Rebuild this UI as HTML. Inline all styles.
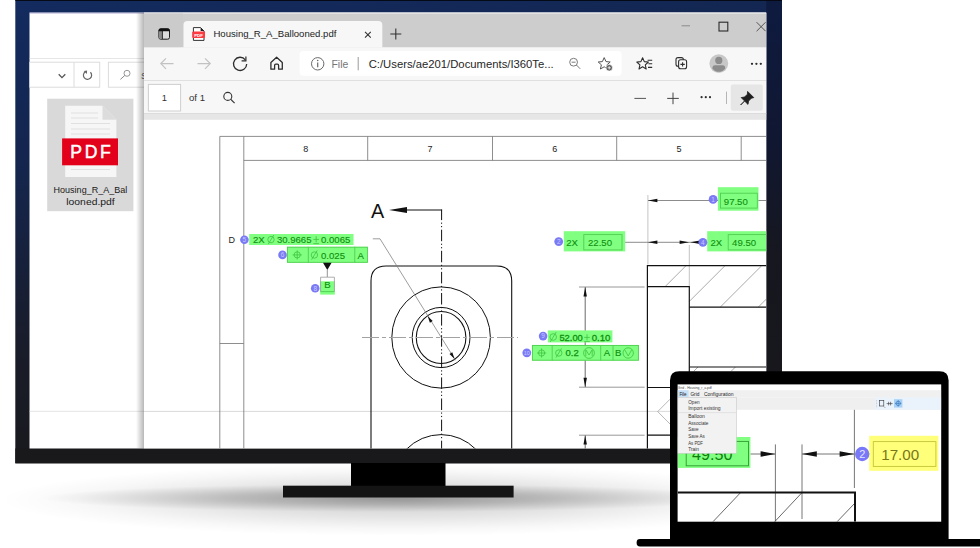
<!DOCTYPE html>
<html lang="en">
<head>
<meta charset="utf-8">
<title>Housing_R_A_Ballooned.pdf</title>
<style>
html,body{margin:0;padding:0;background:#fff;}
body{width:980px;height:548px;overflow:hidden;font-family:"Liberation Sans",sans-serif;}
svg{display:block;}
text{font-family:"Liberation Sans",sans-serif;}
</style>
</head>
<body>
<svg width="980" height="548" viewBox="0 0 980 548">
<defs>
  <linearGradient id="bezel" x1="0" y1="0" x2="0.25" y2="1">
    <stop offset="0" stop-color="#132b5f"/>
    <stop offset="0.35" stop-color="#14254d"/>
    <stop offset="0.7" stop-color="#191c2a"/>
    <stop offset="1" stop-color="#19191b"/>
  </linearGradient>
  <linearGradient id="bezelR" x1="0" y1="0" x2="0" y2="1">
    <stop offset="0" stop-color="#0e1b40"/>
    <stop offset="0.3" stop-color="#101731"/>
    <stop offset="0.55" stop-color="#16171f"/>
    <stop offset="1" stop-color="#18181a"/>
  </linearGradient>
  <linearGradient id="winshadow" x1="0" y1="0" x2="1" y2="0">
    <stop offset="0" stop-color="#000" stop-opacity="0"/>
    <stop offset="1" stop-color="#000" stop-opacity="0.28"/>
  </linearGradient>
  <radialGradient id="shA">
    <stop offset="0" stop-color="#000" stop-opacity="0.2"/>
    <stop offset="0.45" stop-color="#000" stop-opacity="0.11"/>
    <stop offset="0.8" stop-color="#000" stop-opacity="0.03"/>
    <stop offset="1" stop-color="#000" stop-opacity="0"/>
  </radialGradient>
  <radialGradient id="shB">
    <stop offset="0" stop-color="#000" stop-opacity="0.27"/>
    <stop offset="0.45" stop-color="#000" stop-opacity="0.17"/>
    <stop offset="0.8" stop-color="#000" stop-opacity="0.06"/>
    <stop offset="1" stop-color="#000" stop-opacity="0"/>
  </radialGradient>
  <filter id="blur12" x="-20%" y="-100%" width="140%" height="300%"><feGaussianBlur stdDeviation="12"/></filter>
  <filter id="blur8" x="-20%" y="-100%" width="140%" height="300%"><feGaussianBlur stdDeviation="7"/></filter>
  <clipPath id="screen"><rect x="29.5" y="12.5" width="736.7" height="436"/></clipPath>
  <clipPath id="lapscreen"><rect x="677.6" y="384.4" width="263.6" height="137.3"/></clipPath>
</defs>

<!-- background -->
<rect width="980" height="548" fill="#ffffff"/>

<!-- ground shadows -->
<g id="shadows">
  <ellipse cx="400" cy="500" rx="400" ry="36" fill="url(#shA)"/>
  <ellipse cx="390" cy="498" rx="350" ry="14" fill="url(#shB)"/>
</g>

<!-- monitor -->
<g id="monitor">
  <rect x="15.3" y="0" width="766.7" height="463.3" fill="url(#bezel)"/>
  <rect x="766.2" y="0" width="15.8" height="463.3" fill="url(#bezelR)"/>
  <rect x="15.3" y="0" width="766.7" height="0.9" fill="#05070f"/>
  <rect x="15.3" y="448.5" width="766.7" height="14.8" fill="#19191b"/>
  <rect x="29.5" y="12.5" width="736.7" height="436" fill="#ffffff"/>
  <!-- stand -->
  <rect x="351" y="463" width="94.5" height="23" fill="#000000"/>
  <rect x="283" y="485.7" width="230.6" height="11.8" fill="#141414"/>
</g>

<g id="screen-content" clip-path="url(#screen)">
  <!-- file explorer -->
  <g id="explorer">
    <rect x="29.5" y="12.5" width="120" height="1" fill="#7c6fb5" opacity="0.6"/>
    <rect x="29.5" y="58" width="115" height="1" fill="#e6e6e6"/>
    <rect x="22" y="62.2" width="77.7" height="25" fill="#fff" stroke="#dcdcdc" stroke-width="1"/>
    <line x1="74" y1="62.2" x2="74" y2="87.2" stroke="#dcdcdc"/>
    <rect x="108.4" y="62.2" width="50" height="25" fill="#fff" stroke="#dcdcdc" stroke-width="1"/>
    <path d="M58.7 74.3 L62 77.6 L65.3 74.3" fill="none" stroke="#555" stroke-width="1.3"/>
    <path d="M85.4 71.7 A4.1 4.1 0 1 0 90.4 72.3" fill="none" stroke="#666" stroke-width="1.2"/>
    <path d="M83.7 70.9 L87.1 70.6 L86.9 74 Z" fill="#666"/>
    <circle cx="127" cy="73.3" r="3" fill="none" stroke="#8a8a8a" stroke-width="0.9"/>
    <line x1="124.8" y1="75.4" x2="120.4" y2="79.4" stroke="#8a8a8a" stroke-width="1"/>
    <text x="141" y="78.6" font-size="9.4" fill="#666">S</text>
    <!-- selected file -->
    <rect x="47.2" y="98.7" width="86.2" height="112.5" fill="#d9d9d9"/>
    <path d="M65.2 105.8 H102.5 L116.4 119.8 V177 H65.2 Z" fill="#f6f6f6"/>
    <path d="M102.5 105.8 L116.4 119.8 H102.5 Z" fill="#dcdcdc"/>
    <g stroke="#dedede" stroke-width="0.9">
      <line x1="71" y1="113" x2="98" y2="113"/><line x1="71" y1="118" x2="98" y2="118"/>
      <line x1="71" y1="123.5" x2="110" y2="123.5"/><line x1="71" y1="129" x2="110" y2="129"/><line x1="71" y1="134" x2="110" y2="134"/>
      <line x1="71" y1="169.5" x2="110" y2="169.5"/>
    </g>
    <rect x="62.1" y="138.4" width="55.9" height="26.9" fill="#e2001a"/>
    <text x="70.2" y="157.5" font-size="17.6" fill="#ffffff" stroke="#ffffff" stroke-width="0.5" textLength="40.6" lengthAdjust="spacing">PDF</text>
    <text x="53.6" y="193" font-size="9.8" fill="#1a1a1a" textLength="73.6" lengthAdjust="spacingAndGlyphs">Housing_R_A_Bal</text>
    <text x="66.3" y="205.2" font-size="9.8" fill="#1a1a1a" textLength="48.4" lengthAdjust="spacingAndGlyphs">looned.pdf</text>
    <rect x="29.5" y="410.8" width="115" height="1" fill="#e4e4e4"/>
  </g>

  <!-- browser window -->
  <g id="browser">
    <rect x="136" y="12.5" width="8" height="436" fill="url(#winshadow)"/>
    <rect x="144" y="12.5" width="623" height="436" fill="#ffffff"/>
    <rect x="144" y="12.5" width="623" height="1.2" fill="#e9e9e9"/>
    <!-- title bar -->
    <rect x="144" y="13.6" width="623" height="34" fill="#cdcdcd"/>
    <path d="M144 13.6 H183 V43.5 Q183 47.5 179 47.5 H144 Z" fill="#cbcbcb"/>
    <!-- vertical tabs icon -->
    <rect x="158.9" y="28.8" width="10.6" height="10.4" rx="1.8" fill="#dcdcdc" stroke="#1c1c1c" stroke-width="1"/>
    <rect x="159.4" y="30" width="3" height="8.6" fill="#8c8c8c"/>
    <path d="M158.6 31.2 V30.4 Q158.6 28.4 160.6 28.4 H167.8 Q169.8 28.4 169.8 30.4 V31.2 Z" fill="#111"/>
    <line x1="162.4" y1="31" x2="162.4" y2="39" stroke="#1c1c1c" stroke-width="0.9"/>
    <!-- tab -->
    <path d="M183.5 47.6 V25 Q183.5 21 187.5 21 H378.3 Q382.3 21 382.3 25 V47.6 Z" fill="#f7f7f7"/>
    <!-- pdf favicon -->
    <path d="M193.4 27.6 H200.6 L204 31 V40.4 H193.4 Z" fill="#fff" stroke="#333" stroke-width="1"/>
    <path d="M200.6 27.6 L204 31 H200.6 Z" fill="#222"/>
    <rect x="192.2" y="31.4" width="12.8" height="6.6" rx="1" fill="#fb3a42"/>
    <text x="198.6" y="36.7" font-size="4.4" font-weight="bold" fill="#fff" text-anchor="middle">PDF</text>
    <text x="213.4" y="37.2" font-size="9.8" fill="#222" textLength="123" lengthAdjust="spacingAndGlyphs">Housing_R_A_Ballooned.pdf</text>
    <path d="M365 31.8 L370.8 37.6 M370.8 31.8 L365 37.6" stroke="#333" stroke-width="1.1" fill="none"/>
    <path d="M390.3 34 H401.3 M395.8 28.5 V39.5" stroke="#333" stroke-width="1.1" fill="none"/>
    <!-- window controls -->
    <line x1="681.6" y1="25.8" x2="690" y2="25.8" stroke="#8a8a8a" stroke-width="1"/>
    <rect x="719" y="22.2" width="8.8" height="8.8" fill="none" stroke="#2a2a2a" stroke-width="1.1"/>
    <path d="M756.6 22.2 L765.6 31.2 M765.6 22.2 L756.6 31.2" stroke="#555" stroke-width="1" fill="none"/>
    <!-- nav toolbar -->
    <rect x="144" y="47.5" width="623" height="32.7" fill="#f7f7f7"/>
    <rect x="144" y="80" width="623" height="0.9" fill="#dadada"/>
    <g fill="none" stroke="#c2c2c2" stroke-width="1.2">
      <path d="M173.5 63.6 H161 M166 58.4 L160.8 63.6 L166 68.8"/>
      <path d="M197.5 63.6 H210 M205 58.4 L210.2 63.6 L205 68.8"/>
    </g>
    <g fill="none" stroke="#2d2d2d" stroke-width="1.3">
      <path d="M246.7 64 A6.6 6.6 0 1 1 245.3 59.8"/>
      <path d="M245.9 56.6 V60.9 H241.6" stroke-width="1.2"/>
      <path d="M270.9 62.4 L276.6 57.3 L282.3 62.4 V69.2 H278.6 V65.4 Q278.6 64.2 277.4 64.2 H275.8 Q274.6 64.2 274.6 65.4 V69.2 H270.9 Z" stroke-linejoin="round"/>
    </g>
    <!-- address bar -->
    <rect x="299.6" y="51" width="322" height="24.8" rx="3.5" fill="#ffffff"/>
    <circle cx="317.7" cy="63.8" r="6.2" fill="none" stroke="#6a6a6a" stroke-width="1"/>
    <path d="M317.7 62.6 V67.2" stroke="#6a6a6a" stroke-width="1.2"/>
    <circle cx="317.7" cy="60.5" r="0.8" fill="#6a6a6a"/>
    <text x="331.5" y="67.8" font-size="11.4" fill="#767676" textLength="16.8" lengthAdjust="spacingAndGlyphs">File</text>
    <line x1="358.2" y1="57" x2="358.2" y2="70.3" stroke="#9a9a9a" stroke-width="1"/>
    <text x="368.7" y="67.8" font-size="11.4" fill="#262626" textLength="185" lengthAdjust="spacingAndGlyphs">C:/Users/ae201/Documents/I360Te...</text>
    <!-- address bar icons -->
    <g fill="none" stroke="#7a7a7a" stroke-width="1">
      <circle cx="573.6" cy="62.2" r="3.9"/>
      <path d="M576.4 65 L580.2 68.8 M571.6 62.2 H575.6"/>
    </g>
    <path d="M604.2 57.6 L606 61.6 L610.2 62 L607 64.8 L608 69 L604.2 66.8 L600.4 69 L601.4 64.8 L598.2 62 L602.4 61.6 Z" fill="none" stroke="#555" stroke-width="1" stroke-linejoin="round"/>
    <circle cx="609.2" cy="67.8" r="3.3" fill="#5c5c5c" stroke="#fff" stroke-width="0.7"/>
    <path d="M607.5 67.8 H610.9 M609.2 66.1 V69.5" stroke="#fff" stroke-width="0.8"/>
    <!-- right toolbar icons -->
    <g fill="none" stroke="#2d2d2d" stroke-width="1.1" stroke-linejoin="round">
      <path d="M642.6 57.8 L644.3 61.6 L648.4 62 L645.3 64.8 L646.2 69 L642.6 66.8 L639 69 L639.9 64.8 L636.8 62 L640.9 61.6 Z"/>
      <path d="M647.6 60.2 H652.2 M648.4 63.8 H652.2 M648 67.4 H652.2"/>
      <rect x="676" y="57.6" width="7.4" height="8.6" rx="2"/>
      <rect x="678.6" y="59.8" width="8" height="9" rx="2" fill="#f7f7f7"/>
      <path d="M680.4 64.4 H684.8 M682.6 62.2 V66.6"/>
    </g>
    <circle cx="718.8" cy="63.6" r="9.4" fill="#c8c8c8"/>
    <circle cx="718.8" cy="60.4" r="3.6" fill="#8c8c8c"/>
    <path d="M712.4 68.4 Q712.4 65.2 715 65.2 H722.6 Q725.2 65.2 725.2 68.4 Q722.8 71.8 718.8 71.8 Q714.8 71.8 712.4 68.4 Z" fill="#8c8c8c"/>
    <g fill="#2d2d2d"><circle cx="752" cy="63.8" r="1.15"/><circle cx="756.4" cy="63.8" r="1.15"/><circle cx="760.8" cy="63.8" r="1.15"/></g>
    <!-- pdf toolbar -->
    <rect x="144" y="80.9" width="623" height="32.5" fill="#f7f7f7"/>
    <rect x="148.4" y="84.4" width="32.2" height="26.6" fill="#ffffff" stroke="#cfcfcf" stroke-width="1"/>
    <text x="164.3" y="101.4" font-size="9.4" fill="#333" text-anchor="middle">1</text>
    <text x="189" y="101.4" font-size="9.4" fill="#333" textLength="16" lengthAdjust="spacingAndGlyphs">of 1</text>
    <circle cx="227.8" cy="96.4" r="4" fill="none" stroke="#333" stroke-width="1.1"/>
    <line x1="230.8" y1="99.4" x2="234.6" y2="103.2" stroke="#333" stroke-width="1.2"/>
    <line x1="634.4" y1="98.4" x2="646" y2="98.4" stroke="#555" stroke-width="1"/>
    <path d="M667.2 98.4 H678.8 M673 92.6 V104.2" stroke="#444" stroke-width="1" fill="none"/>
    <g fill="#2d2d2d"><circle cx="701.6" cy="97.2" r="1.1"/><circle cx="705.8" cy="97.2" r="1.1"/><circle cx="710" cy="97.2" r="1.1"/></g>
    <line x1="726.5" y1="91.6" x2="726.5" y2="104" stroke="#b5b5b5" stroke-width="1"/>
    <rect x="730.8" y="84.6" width="32" height="26.2" rx="2" fill="#e6e6e6"/>
    <path d="M747.6 91.4 L753.8 97.6 L751.4 98.2 L748.6 101 L748 104.4 L744.6 101 L740.6 105 L744.6 101 L741.2 97.6 L744.6 97 L747.4 94.2 Z" fill="#1e1e1e" stroke="#1e1e1e" stroke-width="0.8" stroke-linejoin="round"/>
    <!-- gray band under toolbar -->
    <rect x="144" y="113.4" width="623" height="6.4" fill="#e6e6e6"/>
    <rect x="144" y="113.2" width="623" height="0.8" fill="#d8d8d8"/>
  </g>

  <g id="pdf">
    <!-- light horizontal line -->
    <rect x="144" y="410.9" width="623" height="1" fill="#dadada"/>
    <!-- frame -->
    <g fill="none" stroke="#7a7a7a" stroke-width="0.85">
      <path d="M767 136.4 H219.8 V449"/>
      <path d="M243.8 136.4 V449"/>
      <path d="M243.8 160.4 H767"/>
      <path d="M367.7 136.4 V160.4 M492.5 136.4 V160.4 M616.7 136.4 V160.4 M741.2 136.4 V160.4"/>
      <path d="M219.8 343.5 H243.8"/>
    </g>
    <g font-size="9" fill="#222" text-anchor="middle">
      <text x="305.7" y="152">8</text>
      <text x="429.9" y="152">7</text>
      <text x="554.7" y="152">6</text>
      <text x="679" y="152">5</text>
    </g>
    <text x="228.4" y="243.4" font-size="9" fill="#222">D</text>

    <!-- section arrow A -->
    <text x="377.6" y="218" font-size="19.8" fill="#111" text-anchor="middle">A</text>
    <path d="M404 210 H442.1" stroke="#111" stroke-width="1.2" fill="none"/>
    <path d="M389 210 L407 207 V213 Z" fill="#111"/>
    <path d="M441.6 209.6 V449" stroke="#111" stroke-width="1" fill="none" stroke-dasharray="11.5 2.5 1.2 2.2 1.2 2.5" stroke-dashoffset="1"/>

    <!-- front view -->
    <path d="M371 449 V281 Q371 266 386 266 H496.7 Q511.7 266 511.7 281 V449" fill="none" stroke="#111" stroke-width="1.1"/>
    <ellipse cx="441.1" cy="337.5" rx="49.3" ry="50.6" fill="none" stroke="#111" stroke-width="1"/>
    <ellipse cx="441.1" cy="337.5" rx="28.9" ry="30.1" fill="none" stroke="#111" stroke-width="1"/>
    <ellipse cx="441.1" cy="337.5" rx="24.8" ry="26" fill="none" stroke="#111" stroke-width="1.1"/>
    <ellipse cx="441.1" cy="485.2" rx="49.3" ry="50.6" fill="none" stroke="#111" stroke-width="1"/>
    <path d="M362 337.5 H518" stroke="#a2a2a2" stroke-width="1.1" fill="none" stroke-dasharray="17 3 4 3"/>
    <!-- leader -->
    <path d="M372.8 238.8 H380 L455.4 360.2" fill="none" stroke="#7c7c7c" stroke-width="0.75"/>
    <path d="M427.6 315.9 L429.9 322.7 L432.7 320.9 Z M454.6 359.1 L449.5 354.1 L452.3 352.3 Z" fill="#111"/>

    <!-- dimension lines top right -->
    <g fill="none" stroke="#bdbdbd" stroke-width="0.9">
      <path d="M647.9 195 V264.5"/>
      <path d="M689.3 245 V286"/>
    </g>
    <g fill="none" stroke="#6e6e6e" stroke-width="0.8">
      <path d="M648 200.5 H718 M758 200.5 H767"/>
      <path d="M625 242.3 H707"/>
    </g>
    <g fill="#111">
      <path d="M648 200.5 L657.4 198.8 V202.2 Z"/>
      <path d="M648 242.3 L657.4 240.6 V244 Z"/>
      <path d="M689 242.3 L679.6 240.6 V244 Z"/>
      <path d="M690.4 242.3 L699.8 240.6 V244 Z"/>
    </g>

    <!-- vertical dimension -->
    <g fill="none" stroke="#444" stroke-width="0.8">
      <path d="M585.2 287 V387.2"/>
      <path d="M585.2 435.2 V449"/>
    </g>
    <g fill="none" stroke="#8c8c8c" stroke-width="0.9">
      <path d="M579 287 H644.6 M579 387.2 H644.6 M579 435.2 H644.6"/>
    </g>
    <path d="M630 286.6 H644" stroke="#c8c8c8" stroke-width="0.9" fill="none"/>
    <g fill="#111">
      <path d="M585.2 287 L583.5 296.4 H586.9 Z"/>
      <path d="M585.2 387.2 L583.5 377.8 H586.9 Z"/>
      <path d="M585.2 435.2 L583.5 444.6 H586.9 Z"/>
    </g>

    <!-- section view -->
    <g fill="none" stroke="#858585" stroke-width="0.7">
      <path d="M665.1 286.6 L685.9 265.8"/>
      <path d="M689.3 301.4 L724.9 265.8"/>
      <path d="M720.2 307.2 L761.6 265.8"/>
      <path d="M758.2 307.2 L767 298.4"/>
      <path d="M693.6 371.4 L698 367 M731 371.4 L735.4 367"/>
    </g>
    <g fill="none" stroke="#111" stroke-width="1.2">
      <path d="M767 265.7 H647.4 V449"/>
      <path d="M647.4 286.7 H689.3 V449"/>
      <path d="M689.3 307.2 H767"/>
      <path d="M689.3 367 H767"/>
      <path d="M647.4 387.5 H689.3"/>
      <path d="M647.4 435.1 H689.3"/>
    </g>
    <g fill="none" stroke="#999" stroke-width="0.7">
      <path d="M670 399.2 L657.7 411.6 L670 424"/>
    </g>

    <!-- green highlights -->
    <g fill="#80ff80">
      <rect x="249.2" y="234" width="104.3" height="11"/>
      <rect x="287" y="246.8" width="80.8" height="15.9"/>
      <rect x="320.2" y="281.3" width="14.6" height="13.3"/>
      <rect x="717.9" y="187.2" width="40.6" height="23.5"/>
      <rect x="563.8" y="231.2" width="61.4" height="20.2"/>
      <rect x="707.2" y="231.2" width="60" height="20.2"/>
      <rect x="547.8" y="330.4" width="64.6" height="12"/>
      <rect x="532" y="345" width="106.8" height="15.6"/>
    </g>
    <!-- inner boxes -->
    <g fill="none" stroke="#4fcf4f" stroke-width="0.9">
      <path d="M308.3 246.8 V262.7 M354.8 246.8 V262.7"/>
      <rect x="287.4" y="247.2" width="80" height="15.1"/>
      <rect x="720.5" y="193.2" width="36.8" height="14.9"/>
      <rect x="583.8" y="234.6" width="38.2" height="15.3"/>
      <rect x="728.2" y="234.6" width="45" height="15.3"/>
      <path d="M552.2 345 V360.6 M600.7 345 V360.6 M613 345 V360.6"/>
      <rect x="532.4" y="345.4" width="106" height="14.8"/>
    </g>
    <!-- datum B -->
    <path d="M323 262.7 H331.6 L327.3 270 Z" fill="#111"/>
    <path d="M327.3 270 V277" stroke="#888" stroke-width="0.9" fill="none"/>
    <path d="M320.6 291.6 V277.2 H334.4 V291.6" fill="none" stroke="#9a9a9a" stroke-width="0.8"/>
    <path d="M320.6 291.6 H334.4" fill="none" stroke="#4fcf4f" stroke-width="0.9"/>

    <!-- green texts -->
    <g font-size="9.6" fill="#0f8f0f" stroke="#0f8f0f" stroke-width="0.12">
      <text x="253" y="243">2X</text>
      <text x="276.9" y="243" textLength="34.6" lengthAdjust="spacingAndGlyphs">30.9665</text>
      <text x="321" y="243" textLength="29.4" lengthAdjust="spacingAndGlyphs">0.0065</text>
      <text x="321" y="258.5" textLength="24" lengthAdjust="spacingAndGlyphs">0.025</text>
      <text x="360.7" y="258.5" text-anchor="middle">A</text>
      <text x="327.5" y="288.4" text-anchor="middle">B</text>
      <text x="723.8" y="204.5" stroke-width="0.1" textLength="24" lengthAdjust="spacingAndGlyphs">97.50</text>
      <text x="566.2" y="246" stroke-width="0.1">2X</text>
      <text x="588" y="246" stroke-width="0.1" textLength="24" lengthAdjust="spacingAndGlyphs">22.50</text>
      <text x="710.5" y="246" stroke-width="0.1">2X</text>
      <text x="732.1" y="246" stroke-width="0.1" textLength="24" lengthAdjust="spacingAndGlyphs">49.50</text>
      <text x="559.4" y="341.2" textLength="23.4" lengthAdjust="spacingAndGlyphs" stroke-width="0.3">52.00</text>
      <text x="591.7" y="341.2" textLength="18.8" lengthAdjust="spacingAndGlyphs" stroke-width="0.3">0.10</text>
      <text x="565.6" y="356.3" textLength="13.2" lengthAdjust="spacingAndGlyphs" stroke-width="0.25">0.2</text>
      <text x="606.9" y="356.3" text-anchor="middle">A</text>
      <text x="615" y="356.3">B</text>
    </g>
    <!-- light-green symbols -->
    <g fill="none" stroke="#3fc43f" stroke-width="0.8">
      <!-- diameter symbols -->
      <circle cx="271" cy="239.6" r="3.2"/><path d="M268.2 244.2 L273.8 235"/>
      <circle cx="314.4" cy="255" r="3.2"/><path d="M311.6 259.6 L317.2 250.4"/>
      <circle cx="553.2" cy="337" r="3.3"/><path d="M550.2 342 L556.2 332"/>
      <circle cx="558.8" cy="353" r="3.2"/><path d="M556 357.6 L561.6 348.4"/>
      <!-- plus-minus -->
      <path d="M313.4 239.4 H319 M316.2 236.2 V242.4 M313.4 243.6 H319"/>
      <path d="M584.2 337.4 H589.8 M587 334.2 V340.4 M584.2 341.6 H589.8"/>
      <!-- position symbols -->
      <circle cx="297.2" cy="254.9" r="3.1"/><path d="M292.6 254.9 H301.8 M297.2 250.3 V259.5"/>
      <circle cx="541.6" cy="353" r="3.1"/><path d="M537 353 H546.2 M541.6 348.4 V357.6"/>
      <!-- M circles -->
      <circle cx="589" cy="353" r="5.4"/><path d="M585.8 356.2 V349.8 L589 355 L592.2 349.8 V356.2"/>
      <circle cx="628.2" cy="353" r="5.2"/><path d="M624.6 349.6 L628.2 356 L631.8 349.6"/>
    </g>

    <!-- balloons -->
    <g fill="#7a7af6">
      <circle cx="244.4" cy="239.7" r="4.3"/>
      <circle cx="282.5" cy="254.9" r="4.3"/>
      <circle cx="315.2" cy="288.3" r="4.3"/>
      <circle cx="713.1" cy="199.4" r="4.4"/>
      <circle cx="558.7" cy="241.6" r="4.4"/>
      <circle cx="702.9" cy="242.3" r="4.4"/>
      <circle cx="543.1" cy="336.1" r="4.3"/>
      <circle cx="526.8" cy="352.8" r="4.4"/>
    </g>
    <g font-size="6.4" fill="#c9c9ff" text-anchor="middle">
      <text x="244.4" y="242">5</text>
      <text x="282.5" y="257.2">6</text>
      <text x="315.2" y="290.6">8</text>
      <text x="713.1" y="201.7">1</text>
      <text x="558.7" y="243.9">2</text>
      <text x="702.9" y="244.6">4</text>
      <text x="543.1" y="338.4">9</text>
      <text x="526.8" y="355" font-size="5.6" textLength="6" lengthAdjust="spacingAndGlyphs">10</text>
    </g>
  </g>
</g>

<g id="laptop">
  <!-- shadow left of laptop -->
  <!-- lid -->
  <path d="M670 541 V380.4 Q670 371.2 679.2 371.2 H939.4 Q948.6 371.2 948.6 380.4 V541 Z" fill="#000000"/>
  <rect x="677.6" y="384.4" width="263.6" height="137.3" fill="#ffffff"/>
  <g clip-path="url(#lapscreen)">
    <!-- title -->
    <text x="677.8" y="388.7" font-size="4" fill="#444" textLength="34" lengthAdjust="spacingAndGlyphs">Grid - Housing_r_a.pdf</text>
    <!-- menu bar -->
    <rect x="677.6" y="390.2" width="263.6" height="7.2" fill="#f0f0f0"/>
    <rect x="677.6" y="390.2" width="11" height="7.2" fill="#c6e0f7"/>
    <g font-size="5.2" fill="#222">
      <text x="679.4" y="395.8" textLength="7.2" lengthAdjust="spacingAndGlyphs">File</text>
      <text x="690.4" y="395.8" textLength="9" lengthAdjust="spacingAndGlyphs">Grid</text>
      <text x="704" y="395.8" textLength="29.4" lengthAdjust="spacingAndGlyphs">Configuration</text>
    </g>
    <!-- toolbar -->
    <rect x="677.6" y="397.4" width="263.6" height="12.4" fill="#efefef"/>
    <rect x="875" y="397.4" width="66.2" height="12.4" fill="#eaf2fb"/>
    <rect x="894" y="399.2" width="8.4" height="8.4" fill="#a9d1f6"/>
    <g fill="none" stroke="#333" stroke-width="0.6">
      <path d="M876.6 400 V407.4" stroke="#aaa" stroke-dasharray="0.8 0.8"/>
      <rect x="879.4" y="400.4" width="4.4" height="5.6"/>
      <path d="M884 406.6 L885 407.6"/>
      <path d="M886.6 403.6 H892.6 M888.6 401.8 V405.4 M890.6 401.8 V405.4"/>
      <circle cx="898.2" cy="403.4" r="2.2" stroke="#2a6fb8"/>
      <path d="M895 403.4 H901.4 M898.2 400.2 V406.6" stroke="#2a6fb8"/>
    </g>
    <!-- drawing lines -->
    <g fill="none" stroke="#666" stroke-width="0.9">
      <path d="M750.4 454 H775.4 M802 454 H854.4 M869 454 H873"/>
      <path d="M775.4 444.4 V521.8 M802 444.4 V519"/>
      <path d="M854.4 409.8 V488"/>
    </g>
    <g fill="#111">
      <path d="M775.4 454 L760.6 451.2 V456.8 Z"/>
      <path d="M802 454 L816.8 451.2 V456.8 Z"/>
      <path d="M854.4 454 L839.6 451.2 V456.8 Z"/>
    </g>
    <g fill="none" stroke="#444" stroke-width="0.8">
      <path d="M712.9 521.8 L740.6 492.6"/>
      <path d="M774.6 521.8 L802 492.6"/>
      <path d="M837 521.8 L855 503"/>
    </g>
    <path d="M677.6 492.6 H855 V521.8" fill="none" stroke="#111" stroke-width="2"/>
    <!-- green box -->
    <rect x="677.6" y="437" width="72.8" height="30.9" fill="#80ff80"/>
    <rect x="686.2" y="441.4" width="62.3" height="24.4" fill="none" stroke="#2f9a2f" stroke-width="0.9"/>
    <text x="692" y="459.6" font-size="16.2" fill="#0e7f0e" textLength="40.4" lengthAdjust="spacingAndGlyphs">49.50</text>
    <!-- dropdown menu -->
    <rect x="677.8" y="397.3" width="58.6" height="56" fill="#f2f2f2" stroke="#c9c9c9" stroke-width="0.6"/>
    <path d="M678.4 412.6 H736" stroke="#d5d5d5" stroke-width="0.6"/>
    <g font-size="5" fill="#333">
      <text x="688.2" y="403.6" textLength="11.4" lengthAdjust="spacingAndGlyphs">Open</text>
      <text x="688.2" y="410.4" textLength="32.4" lengthAdjust="spacingAndGlyphs">Import existing</text>
      <text x="688.2" y="417.8" textLength="16.6" lengthAdjust="spacingAndGlyphs">Balloon</text>
      <text x="688.2" y="424.6" textLength="20.2" lengthAdjust="spacingAndGlyphs">Associate</text>
      <text x="688.2" y="431.2" textLength="10.4" lengthAdjust="spacingAndGlyphs">Save</text>
      <text x="688.2" y="437.8" textLength="16.6" lengthAdjust="spacingAndGlyphs">Save As</text>
      <text x="688.2" y="444.6" textLength="14.8" lengthAdjust="spacingAndGlyphs">As PDF</text>
      <text x="688.2" y="451.4" textLength="10.8" lengthAdjust="spacingAndGlyphs">Train</text>
    </g>
    <!-- yellow box -->
    <rect x="869.2" y="435.8" width="69.2" height="35" fill="#ffff7a"/>
    <rect x="873.3" y="441.6" width="62.6" height="24.8" fill="none" stroke="#c4c43a" stroke-width="0.9"/>
    <text x="881.2" y="460.4" font-size="15.4" fill="#77771a" textLength="38" lengthAdjust="spacingAndGlyphs">17.00</text>
    <!-- balloon 2 -->
    <circle cx="862.2" cy="454" r="7.2" fill="#7878f8"/>
    <text x="862.2" y="458" font-size="11" fill="#e6e6ff" text-anchor="middle">2</text>
  </g>
  <!-- base -->
  <rect x="636.6" y="539" width="352" height="7.4" rx="3.4" fill="#000000"/>
</g>
</svg>
</body>
</html>
